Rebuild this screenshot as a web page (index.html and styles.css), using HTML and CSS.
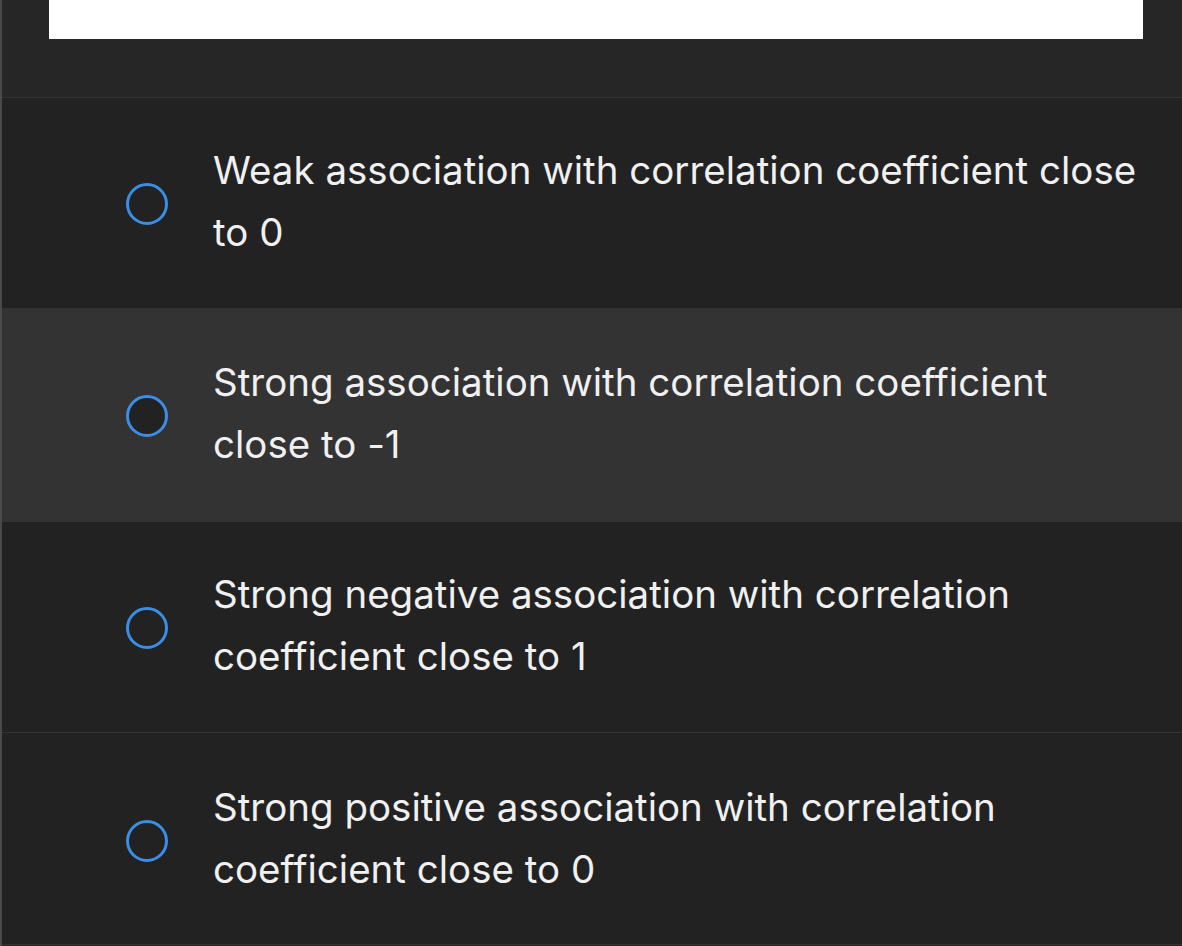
FILE: index.html
```html
<!DOCTYPE html>
<html>
<head>
<meta charset="utf-8">
<link rel="stylesheet" href="styles.css">
</head>
<body>
<div class="page">
  <div class="top">
    <div class="white-box"></div>
  </div>
  <ul class="options">
    <li class="option">
      <span class="radio"></span>
      <span class="label">Weak association with correlation coefficient close to 0</span>
    </li>
    <li class="option hover">
      <span class="radio"></span>
      <span class="label">Strong association with correlation coefficient close to -1</span>
    </li>
    <li class="option">
      <span class="radio"></span>
      <span class="label">Strong negative association with correlation coefficient close to 1</span>
    </li>
    <li class="option last">
      <span class="radio"></span>
      <span class="label">Strong positive association with correlation coefficient close to 0</span>
    </li>
  </ul>
</div>
</body>
</html>
```
FILE: styles.css
```css
html, body {
  margin: 0;
  padding: 0;
  background: #222222;
}
.page {
  width: 1182px;
  height: 946px;
  border-left: 2px solid #4a4a4a;
  box-sizing: border-box;
  background: #222222;
  font-family: "Inter", "Noto Sans", sans-serif;
  color: #f0f0f0;
  overflow: hidden;
}
.top {
  background: #262626;
  height: 97px;
  border-bottom: 1px solid #333333;
  padding: 0 39px 0 47px;
}
.white-box {
  background: #ffffff;
  height: 39px;
}
.options {
  list-style: none;
  margin: 0;
  padding: 0;
}
.option {
  display: flex;
  align-items: center;
  background: #222222;
  border-bottom: 1px solid #333333;
  padding: 41px 42px 45px 124px;
  height: 124px;
}
.option.hover {
  background: #333333;
  border-bottom: none;
  padding-top: 42px;
  padding-bottom: 47px;
}
.option.last {
  padding-top: 43px;
  padding-bottom: 44px;
}
.radio {
  flex: none;
  width: 36px;
  height: 36px;
  border: 3px solid #3a8ee6;
  border-radius: 50%;
  background: #222222;
  margin-right: 45px;
  margin-top: 6px;
}
.label {
  font-size: 38.5px;
  line-height: 62px;
  font-variant-ligatures: none;
}
```
